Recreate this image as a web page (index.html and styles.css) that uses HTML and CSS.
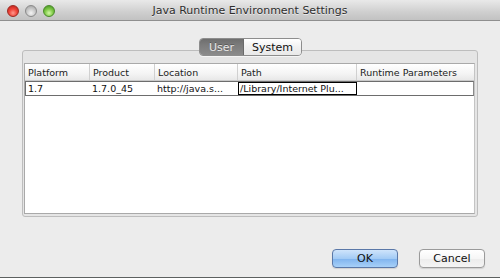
FILE: index.html
```html
<!DOCTYPE html>
<html>
<head>
<meta charset="utf-8">
<link rel="stylesheet" href="styles.css">
</head>
<body>
<div class="window">
  <div class="titlebar">
    <div class="lights">
      <span class="light red"></span>
      <span class="light gray"></span>
      <span class="light green"></span>
    </div>
    <div class="title">Java Runtime Environment Settings</div>
    <div></div>
  </div>
  <div class="content">
    <div class="tabs">
      <div class="tab selected">User</div>
      <div class="tab">System</div>
    </div>
    <div class="panel">
      <div class="table">
        <div class="thead">
          <div class="th c1">Platform</div>
          <div class="th c2">Product</div>
          <div class="th c3">Location</div>
          <div class="th c4">Path</div>
          <div class="th c5">Runtime Parameters</div>
        </div>
        <div class="row">
          <div class="td c1">1.7</div>
          <div class="td c2">1.7.0_45</div>
          <div class="td c3">http://java.s...</div>
          <div class="td c4 focus">/Library/Internet Plu...</div>
          <div class="td c5"></div>
        </div>
      </div>
    </div>
    <div class="buttons">
      <button class="btn ok">OK</button>
      <button class="btn">Cancel</button>
    </div>
  </div>
  <div class="bottomline"></div>
</div>
</body>
</html>
```
FILE: styles.css
```css
html, body {
  margin: 0;
  padding: 0;
  background: #ececec;
}
.window {
  width: 500px;
  height: 278px;
  display: flex;
  flex-direction: column;
  font-family: "DejaVu Sans", "Liberation Sans", sans-serif;
  color: #1a1a1a;
  background: #ececec;
  overflow: hidden;
}
.titlebar {
  height: 20px;
  flex: none;
  display: grid;
  grid-template-columns: 1fr auto 1fr;
  align-items: center;
  background: linear-gradient(#e9e9e9, #cfcfcf 60%, #c2c2c2);
  border-bottom: 1px solid #8f8f8f;
}
.lights {
  display: flex;
  gap: 6px;
  padding-left: 7px;
  padding-top: 1px;
}
.light {
  width: 12px;
  height: 12px;
  border-radius: 50%;
  box-sizing: border-box;
}
.red {
  background: radial-gradient(circle at 50% 70%, #ff9a8e 0, #f0453a 45%, #b51d16 100%);
  border: 1px solid #9c2a22;
}
.gray {
  background: radial-gradient(circle at 50% 70%, #f4f4f4 0, #c8c8c8 50%, #9a9a9a 100%);
  border: 1px solid #8a8a8a;
}
.green {
  background: radial-gradient(circle at 50% 70%, #d4f7a8 0, #82cc4a 45%, #3d8a1c 100%);
  border: 1px solid #4a8a2a;
}
.title {
  font-size: 11px;
  color: #2e2e2e;
  text-shadow: 0 1px 0 rgba(255,255,255,0.6);
  padding-top: 1px;
}
.content {
  flex: 1;
  display: flex;
  flex-direction: column;
}
.tabs {
  align-self: center;
  display: flex;
  margin-top: 17px;
  margin-left: 1px;
  height: 18px;
  position: relative;
  z-index: 1;
  border: 1px solid #8d8d8d;
  border-radius: 4px;
  box-sizing: border-box;
  overflow: hidden;
  font-size: 11px;
  box-shadow: 0 1px 0 rgba(255,255,255,0.6);
}
.tab {
  display: flex;
  align-items: center;
  justify-content: center;
  background: linear-gradient(#ffffff, #f1f1f1 50%, #e9e9e9);
  color: #111;
}
.tab.selected {
  width: 43px;
  background: linear-gradient(#6e6e6e, #7c7c7c 40%, #8b8b8b);
  color: #e8e8e8;
  border-right: 1px solid #6a6a6a;
  text-shadow: 0 -1px 0 rgba(0,0,0,0.3);
}
.tab:not(.selected) {
  width: 57px;
}
.panel {
  margin: -6px 22px 0 22px;
  height: 167px;
  box-sizing: border-box;
  border: 1px solid #bdbdbd;
  border-radius: 3px;
  background: #e5e5e5;
  padding: 12px 2px 2px 1px;
  display: flex;
}
.table {
  flex: 1;
  background: #fff;
  border: 1px solid #a9a9a9;
  border-right-color: #c4c4c4;
  display: flex;
  flex-direction: column;
  font-size: 9.5px;
}
.thead {
  display: flex;
  height: 16px;
  background: linear-gradient(#ffffff, #f4f4f4 60%, #e8e8e8);
  border-bottom: 1px solid #c9c9c9;
}
.th {
  display: flex;
  align-items: center;
  padding-left: 3px;
  box-sizing: border-box;
  border-right: 1px solid #d0d0d0;
  color: #222;
}
.th.c5 { border-right: none; }
.c1 { width: 65px; }
.c2 { width: 65px; }
.c3 { width: 83px; }
.c4 { width: 119px; }
.c5 { flex: 1; }
.row {
  display: flex;
  height: 13px;
  border: 1px solid #6d6d6d;
  border-right-color: #8a8a8a;
}
.td {
  display: flex;
  align-items: center;
  padding-left: 2px;
  box-sizing: border-box;
  color: #111;
  white-space: nowrap;
  overflow: hidden;
}
.td.c1 { width: 64px; }
.td.c4.focus {
  border: 1px solid #000;
  padding-left: 1px;
}
.buttons {
  display: flex;
  justify-content: flex-end;
  gap: 21px;
  margin-top: 32px;
  padding-right: 15px;
}
.btn {
  font-family: "DejaVu Sans", "Liberation Sans", sans-serif;
  font-size: 11px;
  width: 66px;
  height: 19px;
  padding: 0;
  border: 1px solid #9a9a9a;
  border-radius: 4px;
  background: linear-gradient(#ffffff, #f6f6f6 50%, #ececec 51%, #f4f4f4);
  color: #111;
  box-shadow: 0 1px 1px rgba(0,0,0,0.12);
}
.btn.ok {
  width: 66px;
  border-color: #5a78a8;
  background: linear-gradient(#cfe4fb, #a3cbf5 50%, #7fb3ee 51%, #a7d0f8);
}
.bottomline {
  margin-top: auto;
  height: 1px;
  background: #5d6160;
}
```
